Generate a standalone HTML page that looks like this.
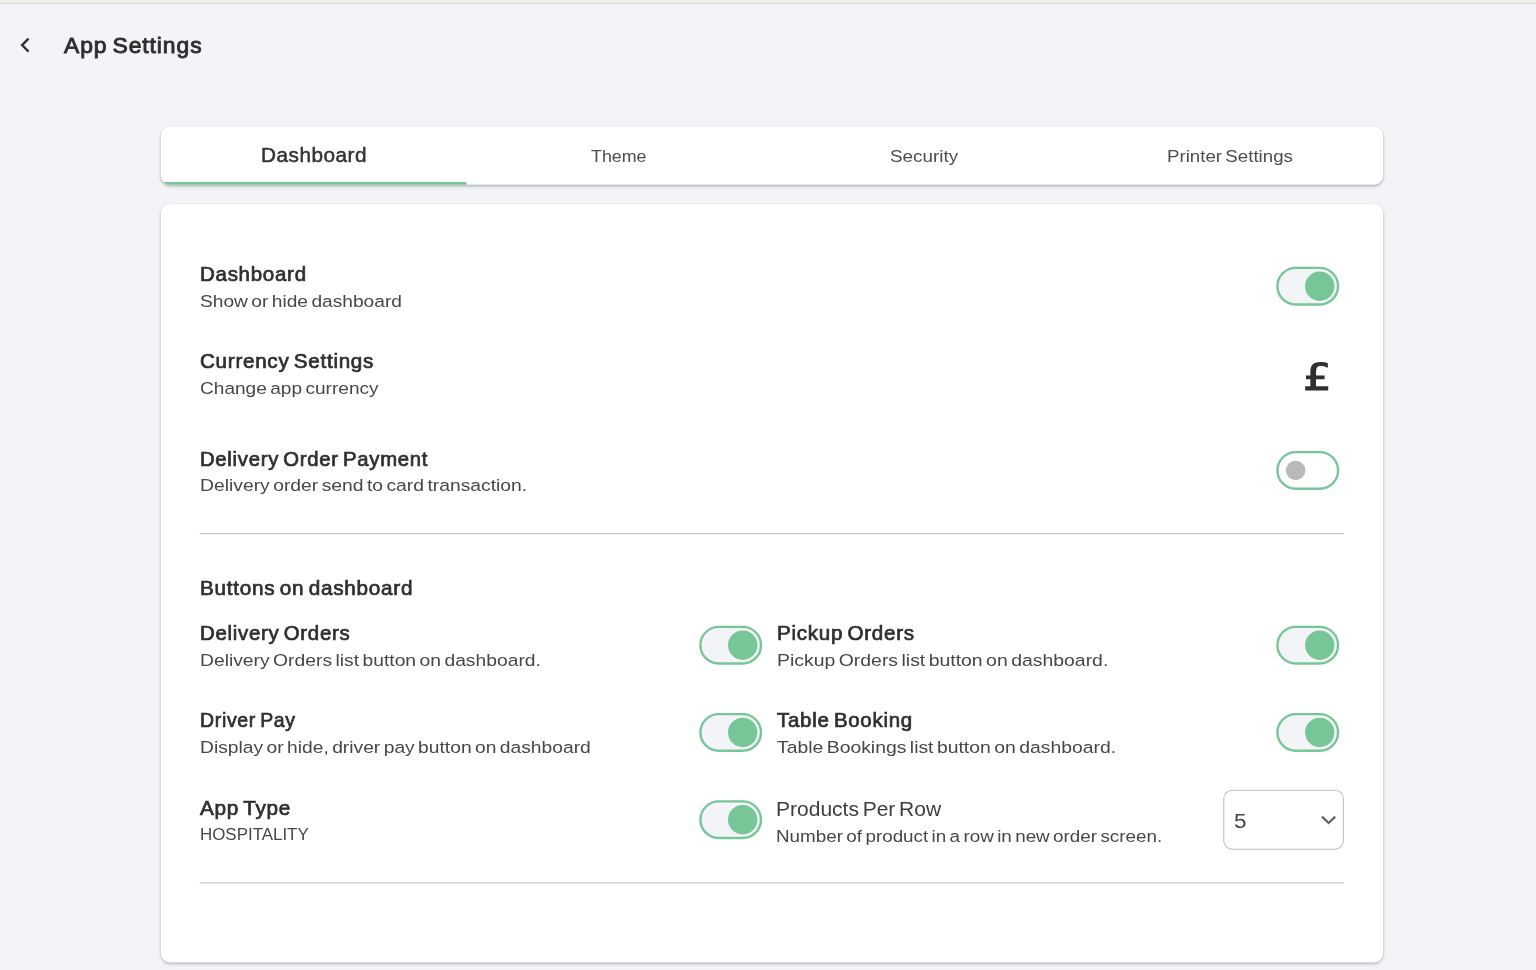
<!DOCTYPE html>
<html lang="en">
<head>
<meta charset="utf-8">
<title>App Settings</title>
<style>
html,body{margin:0;padding:0;}
body{width:1536px;height:970px;overflow:hidden;background:#f3f4f8;font-family:"Liberation Sans",sans-serif;position:relative;}
.topbar{position:absolute;left:0;top:0;width:1536px;height:4px;background:linear-gradient(#f2f1ee 0,#f2f1ee 2px,#e9e9e8 2px,#e9e9e8 3px,#dcdde0 3px,#dcdde0 4px);}
.t{position:absolute;white-space:pre;line-height:30px;transform-origin:0 50%;font-family:"Liberation Sans",sans-serif;}
.tg{position:absolute;}
#txt{position:absolute;left:0;top:0;width:1536px;height:970px;will-change:transform;}
svg.ic{position:absolute;overflow:visible;}
</style>
</head>
<body>
<div class="topbar"></div>
<svg class="ic" style="left:10px;top:30px" width="30" height="30" viewBox="0 0 30 30"><path d="M18.55 8.6 L12.1 15.1 L18.55 21.6" fill="none" stroke="#333" stroke-width="2.4" stroke-linecap="butt" stroke-linejoin="miter"/></svg>
<svg id="cards" width="1536" height="970" viewBox="0 0 1536 970" style="position:absolute;left:0;top:0">
<defs>
<filter id="b1" x="-5%" y="-20%" width="110%" height="140%"><feGaussianBlur stdDeviation="1.2"/></filter>
<filter id="b2" x="-5%" y="-20%" width="110%" height="140%"><feGaussianBlur stdDeviation="2"/></filter>
<clipPath id="tabclip"><rect x="160.8" y="126.5" width="1222.4" height="58.2" rx="9" ry="9"/></clipPath>
</defs>
<rect x="160.8" y="127.5" width="1222.4" height="58.2" rx="9" fill="#000" opacity=".24" filter="url(#b1)"/>
<rect x="160.8" y="128.5" width="1222.4" height="58.2" rx="9" fill="#000" opacity=".10" filter="url(#b2)"/>
<rect x="160.8" y="126.5" width="1222.4" height="58.2" rx="9" fill="#fff"/>
<rect x="160.8" y="181.95" width="305.6" height="3" fill="#77c697" clip-path="url(#tabclip)"/>
<rect x="160.8" y="204.9" width="1222.4" height="758.5" rx="9.6" fill="#000" opacity=".22" filter="url(#b1)"/>
<rect x="160.8" y="205.9" width="1222.4" height="758.5" rx="9.6" fill="#000" opacity=".10" filter="url(#b2)"/>
<rect x="160.8" y="203.9" width="1222.4" height="758.7" rx="9.6" fill="#fff"/>
<rect x="199.8" y="533.0" width="1144.3" height="1.2" fill="#c5c5c5"/>
<rect x="199.8" y="882.3" width="1144.3" height="1.2" fill="#c5c5c5"/>
<rect x="1223.75" y="790.2" width="119.7" height="59.0" rx="8.6" fill="#fff" stroke="#c0c0c0" stroke-width="1.1"/>
</svg>
<svg class="ic" style="left:1318px;top:810px" width="22" height="20" viewBox="0 0 22 20"><path d="M4 6.6 L10.6 13 L17.2 6.6" fill="none" stroke="#646464" stroke-width="2.2" stroke-linecap="butt" stroke-linejoin="miter"/></svg>
<svg class='tg' style='left:1274px;top:264px' width='70' height='46' viewBox='0 0 70 46'><rect x='3.45' y='3.90' width='60.60' height='36.60' rx='18.30' fill='#f3f4f8' stroke='#77c697' stroke-width='2.4'/><circle cx='45.75' cy='22.20' r='14.7' fill='#77c697'/></svg>
<svg class='tg' style='left:1274px;top:448px' width='70' height='46' viewBox='0 0 70 46'><rect x='3.45' y='4.15' width='60.60' height='36.60' rx='18.30' fill='#ffffff' stroke='#77c697' stroke-width='2.4'/><circle cx='21.65' cy='22.45' r='9.75' fill='#b9b9b9'/></svg>
<svg class='tg' style='left:697px;top:623px' width='70' height='46' viewBox='0 0 70 46'><rect x='3.40' y='3.90' width='60.60' height='36.60' rx='18.30' fill='#f3f4f8' stroke='#77c697' stroke-width='2.4'/><circle cx='45.70' cy='22.20' r='14.7' fill='#77c697'/></svg>
<svg class='tg' style='left:697px;top:710px' width='70' height='46' viewBox='0 0 70 46'><rect x='3.40' y='4.15' width='60.60' height='36.60' rx='18.30' fill='#f3f4f8' stroke='#77c697' stroke-width='2.4'/><circle cx='45.70' cy='22.45' r='14.7' fill='#77c697'/></svg>
<svg class='tg' style='left:697px;top:798px' width='70' height='46' viewBox='0 0 70 46'><rect x='3.40' y='3.40' width='60.60' height='36.60' rx='18.30' fill='#f3f4f8' stroke='#77c697' stroke-width='2.4'/><circle cx='45.70' cy='21.70' r='14.7' fill='#77c697'/></svg>
<svg class='tg' style='left:1274px;top:623px' width='70' height='46' viewBox='0 0 70 46'><rect x='3.45' y='3.90' width='60.60' height='36.60' rx='18.30' fill='#f3f4f8' stroke='#77c697' stroke-width='2.4'/><circle cx='45.75' cy='22.20' r='14.7' fill='#77c697'/></svg>
<svg class='tg' style='left:1274px;top:710px' width='70' height='46' viewBox='0 0 70 46'><rect x='3.45' y='4.15' width='60.60' height='36.60' rx='18.30' fill='#f3f4f8' stroke='#77c697' stroke-width='2.4'/><circle cx='45.75' cy='22.45' r='14.7' fill='#77c697'/></svg>
<div id="txt"><div class='t' style='left:63.83px;top:30.98px;font-weight:normal;font-size:22px;color:#2f2f2f;word-spacing:-2.20px;transform:scaleX(1.0387);-webkit-text-stroke:0.9px #2f2f2f;letter-spacing:0.9px;'>App Settings</div>
<div class='t' style='left:260.99px;top:139.50px;font-weight:normal;font-size:20px;color:#333;word-spacing:-2.00px;transform:scaleX(1.0357);-webkit-text-stroke:0.5px #333;letter-spacing:0.5px;'>Dashboard</div>
<div class='t' style='left:590.52px;top:141.41px;font-weight:normal;font-size:17.2px;color:#4d4d4d;word-spacing:-1.72px;transform:scaleX(1.0369);'>Theme</div>
<div class='t' style='left:889.84px;top:141.41px;font-weight:normal;font-size:17.2px;color:#4d4d4d;word-spacing:-1.72px;transform:scaleX(1.0963);'>Security</div>
<div class='t' style='left:1167.27px;top:141.41px;font-weight:normal;font-size:17.2px;color:#4d4d4d;word-spacing:-1.72px;transform:scaleX(1.0873);'>Printer Settings</div>
<div class='t' style='left:199.76px;top:259.42px;font-weight:normal;font-size:19.8px;color:#2f2f2f;word-spacing:-1.98px;transform:scaleX(1.0358);-webkit-text-stroke:0.7px #2f2f2f;letter-spacing:0.7px;'>Dashboard</div>
<div class='t' style='left:200.34px;top:285.71px;font-weight:normal;font-size:17.2px;color:#474747;word-spacing:-1.72px;transform:scaleX(1.1145);'>Show or hide dashboard</div>
<div class='t' style='left:200.42px;top:345.62px;font-weight:normal;font-size:19.8px;color:#2f2f2f;word-spacing:-1.98px;transform:scaleX(1.0416);-webkit-text-stroke:0.7px #2f2f2f;letter-spacing:0.7px;'>Currency Settings</div>
<div class='t' style='left:199.54px;top:372.91px;font-weight:normal;font-size:17.2px;color:#474747;word-spacing:-1.72px;transform:scaleX(1.1098);'>Change app currency</div>
<div class='t' style='left:199.76px;top:443.67px;font-weight:normal;font-size:19.8px;color:#2f2f2f;word-spacing:-1.98px;transform:scaleX(1.0252);-webkit-text-stroke:0.7px #2f2f2f;letter-spacing:0.7px;'>Delivery Order Payment</div>
<div class='t' style='left:199.51px;top:469.96px;font-weight:normal;font-size:17.2px;color:#474747;word-spacing:-1.72px;transform:scaleX(1.1230);'>Delivery order send to card transaction.</div>
<div class='t' style='left:199.73px;top:573.47px;font-weight:normal;font-size:19.8px;color:#2f2f2f;word-spacing:-1.98px;transform:scaleX(1.0470);-webkit-text-stroke:0.7px #2f2f2f;letter-spacing:0.7px;'>Buttons on dashboard</div>
<div class='t' style='left:199.76px;top:618.37px;font-weight:normal;font-size:19.8px;color:#2f2f2f;word-spacing:-1.98px;transform:scaleX(1.0308);-webkit-text-stroke:0.7px #2f2f2f;letter-spacing:0.7px;'>Delivery Orders</div>
<div class='t' style='left:199.51px;top:644.66px;font-weight:normal;font-size:17.2px;color:#474747;word-spacing:-1.72px;transform:scaleX(1.1222);'>Delivery Orders list button on dashboard.</div>
<div class='t' style='left:199.79px;top:704.62px;font-weight:normal;font-size:19.8px;color:#2f2f2f;word-spacing:-1.98px;transform:scaleX(0.9836);-webkit-text-stroke:0.7px #2f2f2f;letter-spacing:0.7px;'>Driver Pay</div>
<div class='t' style='left:199.51px;top:731.91px;font-weight:normal;font-size:17.2px;color:#474747;word-spacing:-1.72px;transform:scaleX(1.1193);'>Display or hide, driver pay button on dashboard</div>
<div class='t' style='left:199.66px;top:792.87px;font-weight:normal;font-size:19.8px;color:#2f2f2f;word-spacing:-1.98px;transform:scaleX(1.0479);-webkit-text-stroke:0.7px #2f2f2f;letter-spacing:0.7px;'>App Type</div>
<div class='t' style='left:199.55px;top:819.26px;font-weight:normal;font-size:17.2px;color:#474747;word-spacing:-1.72px;transform:scaleX(0.9840);'>HOSPITALITY</div>
<div class='t' style='left:776.56px;top:618.37px;font-weight:normal;font-size:19.8px;color:#2f2f2f;word-spacing:-1.98px;transform:scaleX(1.0400);-webkit-text-stroke:0.7px #2f2f2f;letter-spacing:0.7px;'>Pickup Orders</div>
<div class='t' style='left:777.29px;top:644.66px;font-weight:normal;font-size:17.2px;color:#474747;word-spacing:-1.72px;transform:scaleX(1.1295);'>Pickup Orders list button on dashboard.</div>
<div class='t' style='left:776.52px;top:704.62px;font-weight:normal;font-size:19.8px;color:#2f2f2f;word-spacing:-1.98px;transform:scaleX(1.0343);-webkit-text-stroke:0.7px #2f2f2f;letter-spacing:0.7px;'>Table Booking</div>
<div class='t' style='left:777.05px;top:731.91px;font-weight:normal;font-size:17.2px;color:#474747;word-spacing:-1.72px;transform:scaleX(1.1266);'>Table Bookings list button on dashboard.</div>
<div class='t' style='left:775.62px;top:793.79px;font-weight:normal;font-size:20.3px;color:#3d3d3d;word-spacing:-2.03px;transform:scaleX(1.0362);'>Products Per Row</div>
<div class='t' style='left:776.04px;top:820.71px;font-weight:normal;font-size:17.2px;color:#474747;word-spacing:-1.72px;transform:scaleX(1.0961);'>Number of product in a row in new order screen.</div>
<div class='t' style='left:1234.41px;top:806.10px;font-weight:normal;font-size:20px;color:#444;word-spacing:-2.00px;transform:scaleX(1.1270);'>5</div>
<div class='t' style='left:1302.72px;top:362.39px;font-weight:normal;font-size:37.8px;color:#2f2f2f;word-spacing:-3.78px;transform:scaleX(1.1879);font-family:DejaVu Sans,sans-serif;-webkit-text-stroke:1.1px #2f2f2f;'>£</div></div>
</body>
</html>
